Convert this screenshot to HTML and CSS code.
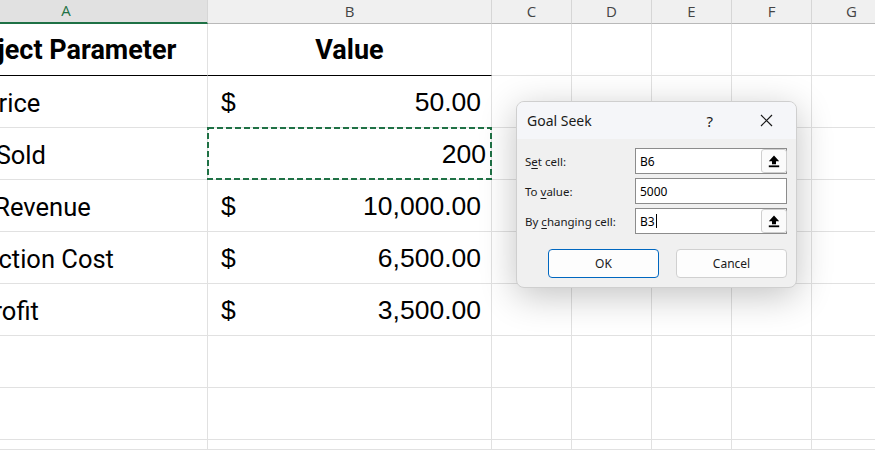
FILE: index.html
```html
<!DOCTYPE html>
<html>
<head>
<meta charset="utf-8">
<link rel="stylesheet" href="styles.css">
</head>
<body>
<div class="sheet">
  <div class="grid">
    <div class="hdr hdr-sel">A</div>
    <div class="hdr">B</div>
    <div class="hdr">C</div>
    <div class="hdr">D</div>
    <div class="hdr">E</div>
    <div class="hdr">F</div>
    <div class="hdr">G</div>

    <div class="cell title-cell col-a">Project Parameter</div>
    <div class="cell title-cell col-b">Value</div>
    <div class="cell"></div><div class="cell"></div><div class="cell"></div><div class="cell"></div><div class="cell"></div>

    <div class="cell label">Unit Price</div>
    <div class="cell money"><span>$</span><span>50.00</span></div>
    <div class="cell"></div><div class="cell"></div><div class="cell"></div><div class="cell"></div><div class="cell"></div>

    <div class="cell label">Units Sold</div>
    <div class="cell plain copy">200
      <svg class="ants" width="285" height="53" viewBox="0 0 285 53"><rect x="1" y="1" width="283" height="51" fill="none" stroke="#1f7145" stroke-width="2" stroke-dasharray="6 3"/></svg>
    </div>
    <div class="cell"></div><div class="cell"></div><div class="cell"></div><div class="cell"></div><div class="cell"></div>

    <div class="cell label">Total Revenue</div>
    <div class="cell money"><span>$</span><span>10,000.00</span></div>
    <div class="cell"></div><div class="cell"></div><div class="cell"></div><div class="cell"></div><div class="cell"></div>

    <div class="cell label">Production Cost</div>
    <div class="cell money"><span>$</span><span>6,500.00</span></div>
    <div class="cell"></div><div class="cell"></div><div class="cell"></div><div class="cell"></div><div class="cell"></div>

    <div class="cell label">Net Profit</div>
    <div class="cell money"><span>$</span><span>3,500.00</span></div>
    <div class="cell"></div><div class="cell"></div><div class="cell"></div><div class="cell"></div><div class="cell"></div>

    <div class="cell"></div><div class="cell"></div><div class="cell"></div><div class="cell"></div><div class="cell"></div><div class="cell"></div><div class="cell"></div>
    <div class="cell"></div><div class="cell"></div><div class="cell"></div><div class="cell"></div><div class="cell"></div><div class="cell"></div><div class="cell"></div>
    <div class="cell"></div><div class="cell"></div><div class="cell"></div><div class="cell"></div><div class="cell"></div><div class="cell"></div><div class="cell"></div>
  </div>

  <div class="dialog">
    <div class="dlg-title">
      <span class="dlg-name">Goal Seek</span>
      <span class="dlg-help">?</span>
      <svg class="dlg-close" width="13" height="13" viewBox="0 0 13 13"><path d="M1 1L12 12M12 1L1 12" stroke="#1a1a1a" stroke-width="1.2" fill="none"/></svg>
    </div>
    <div class="dlg-body">
      <div class="frow">
        <label class="flabel">S<u>e</u>t cell:</label>
        <div class="field"><span class="fval">B6</span>
          <span class="pick"><svg width="14" height="14" viewBox="0 0 14 14"><path d="M7 1.5L12.2 7.2H9V10.3H5V7.2H1.8Z" fill="#000"/><rect x="1.8" y="11.4" width="10.4" height="1.8" fill="#000"/></svg></span>
        </div>
      </div>
      <div class="frow">
        <label class="flabel">To <u>v</u>alue:</label>
        <div class="field"><span class="fval">5000</span></div>
      </div>
      <div class="frow">
        <label class="flabel">By <u>c</u>hanging cell:</label>
        <div class="field"><span class="fval">B3</span><span class="caret"></span>
          <span class="pick"><svg width="14" height="14" viewBox="0 0 14 14"><path d="M7 1.5L12.2 7.2H9V10.3H5V7.2H1.8Z" fill="#000"/><rect x="1.8" y="11.4" width="10.4" height="1.8" fill="#000"/></svg></span>
        </div>
      </div>
      <div class="brow">
        <button class="btn btn-ok">OK</button>
        <button class="btn">Cancel</button>
      </div>
    </div>
  </div>
</div>
</body>
</html>
```

FILE: styles.css
```css
* { box-sizing: border-box; }
html, body { margin: 0; padding: 0; background: #fff; }
.sheet {
  position: relative;
  width: 875px;
  height: 450px;
  overflow: hidden;
  background: #fff;
}
.grid {
  display: grid;
  grid-template-columns: 283px 284px repeat(5, 80px);
  grid-template-rows: 24px repeat(8, 52px);
  margin-left: -75px;
  width: 967px;
}
.hdr {
  background: #f0f0f0;
  border-right: 1px solid #d6d6d6;
  border-bottom: 1px solid #b9b9b9;
  font-family: "Open Sans", "Noto Sans", sans-serif;
  font-size: 15px;
  color: #444;
  display: flex;
  align-items: center;
  justify-content: center;
  line-height: 1;
  padding-bottom: 1px;
}
.hdr-sel {
  background: #e1e1e1;
  color: #1e7145;
  border-bottom: 2px solid #1e7145;
}
.cell {
  border-right: 1px solid #e1e1e1;
  border-bottom: 1px solid #e1e1e1;
  display: flex;
  align-items: flex-end;
  padding-bottom: 9px;
  color: #000;
}
.title-cell {
  font-family: Roboto, "Liberation Sans", sans-serif;
  font-weight: 700;
  font-size: 27px;
  justify-content: center;
  border-bottom: 1px solid #000;
  padding-bottom: 9px;
}
.label {
  font-family: Roboto, "Liberation Sans", sans-serif;
  font-size: 25.5px;
  padding-left: 6px;
  white-space: nowrap;
  overflow: hidden;
}
.money {
  font-family: "Liberation Sans", Arial, sans-serif;
  font-size: 26.5px;
  justify-content: space-between;
  padding-left: 13px;
  padding-right: 10px;
}
.plain {
  font-family: "Liberation Sans", Arial, sans-serif;
  font-size: 26.5px;
  justify-content: flex-end;
  padding-right: 5px;
}
.copy { position: relative; }
.ants {
  position: absolute;
  left: -1px;
  top: -1px;
}

/* dialog */
.dialog {
  position: absolute;
  left: 516px;
  top: 101px;
  width: 281px;
  height: 187px;
  border: 1px solid #cfcfcf;
  border-radius: 8px;
  background: #f0f0f0;
  box-shadow: 0 8px 36px rgba(0, 0, 0, 0.24);
  overflow: hidden;
  font-family: "Noto Sans", "Open Sans", sans-serif;
  color: #1a1a1a;
}
.dlg-title {
  height: 37px;
  background: #f5f6f9;
  display: flex;
  align-items: center;
  padding-left: 10px;
  padding-right: 23px;
}
.dlg-name { font-size: 14px; flex: 1; }
.dlg-help { font-size: 15px; margin-right: 47px; }
.dlg-close { display: block; }
.dlg-body {
  padding: 9px 9px 0 8px;
  display: flex;
  flex-direction: column;
  gap: 4px;
}
.frow {
  display: flex;
  align-items: center;
  height: 26px;
}
.flabel {
  width: 110px;
  font-size: 11.5px;
  white-space: nowrap;
}
.flabel u { text-underline-offset: 2px; }
.field {
  width: 152px;
  height: 26px;
  border: 1px solid #8c8c8c;
  background: #fff;
  display: flex;
  align-items: center;
  padding-left: 4px;
  font-size: 12px;
}
.fval { color: #000; }
.caret {
  width: 1px;
  height: 14px;
  background: #000;
  margin-left: 1px;
}
.pick {
  margin-left: auto;
  margin-right: -1px;
  width: 26px;
  height: 24px;
  border: 1px solid #cfcfcf;
  border-radius: 3px;
  background: #fbfbfb;
  display: flex;
  align-items: center;
  justify-content: center;
}
.pick svg { display: block; }
.brow {
  display: flex;
  gap: 17px;
  margin-top: 11px;
  padding-left: 23px;
}
.btn {
  width: 111px;
  height: 29px;
  border: 1px solid #d0d0d0;
  border-radius: 4px;
  background: #fdfdfd;
  font-family: "Noto Sans", "Open Sans", sans-serif;
  font-size: 12px;
  color: #1a1a1a;
  padding: 0;
}
.btn-ok { border-color: #0067c0; }
```
